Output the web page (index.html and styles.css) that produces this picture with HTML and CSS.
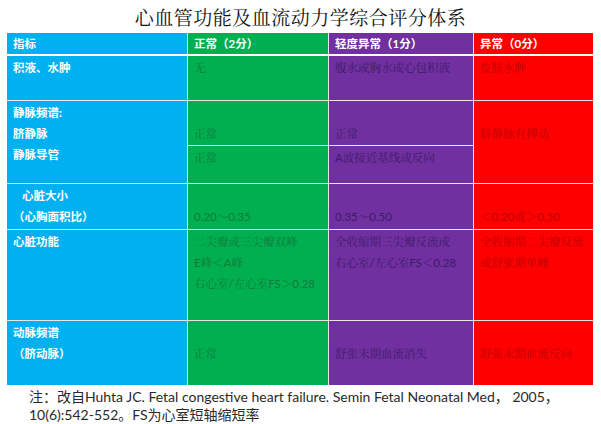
FILE: index.html
```html
<!DOCTYPE html>
<html lang="zh">
<head>
<meta charset="utf-8">
<link rel="stylesheet" href="styles.css">
</head>
<body>
<h1 class="title">心血管功能及血流动力学综合评分体系</h1>
<div class="table">
  <div class="head">
    <div class="c blue">指标</div>
    <div class="c green">正常（2分）</div>
    <div class="c purple">轻度异常（1分）</div>
    <div class="c red">异常（0分）</div>
  </div>
  <div class="body">
    <div class="c blue">积液、水肿</div>
    <div class="c green">无</div>
    <div class="c purple">腹水或胸水或心包积液</div>
    <div class="c red">皮肤水肿</div>

    <div class="c blue span2">静脉频谱:<br>脐静脉<br>静脉导管</div>
    <div class="c green l2">正常</div>
    <div class="c purple l2">正常</div>
    <div class="c red span2 l2">脐静脉有搏动</div>
    <div class="c green">正常</div>
    <div class="c purple">A波接近基线或反向</div>

    <div class="c blue"><span class="indent">心脏大小</span><br>（心胸面积比）</div>
    <div class="c green l2">0.20～0.35</div>
    <div class="c purple l2">0.35～0.50</div>
    <div class="c red l2">＜0.20或＞0.50</div>

    <div class="c blue">心脏功能</div>
    <div class="c green">二尖瓣或三尖瓣双峰<br>E峰＜A峰<br>右心室/左心室FS＞0.28</div>
    <div class="c purple">全收缩期三尖瓣反流或<br>右心室/左心室FS＜0.28</div>
    <div class="c red">全收缩期二尖瓣反流<br>或舒张期单峰</div>

    <div class="c blue">动脉频谱<br>（脐动脉）</div>
    <div class="c green l2">正常</div>
    <div class="c purple l2">舒张末期血流消失</div>
    <div class="c red l2">舒张末期血流反向</div>
  </div>
</div>
<p class="note">注：改自Huhta JC. Fetal congestive heart failure. Semin Fetal Neonatal Med， 2005，<br>10(6):542-552。FS为心室短轴缩短率</p>
</body>
</html>
```
FILE: styles.css
```css
html, body {
  margin: 0;
  padding: 0;
  background: #ffffff;
}
body {
  width: 601px;
  height: 424px;
  overflow: hidden;
  font-family: "Lato", "Noto Sans CJK SC", sans-serif;
}
.title {
  margin: 0;
  height: 33px;
  line-height: 33px;
  text-align: center;
  font-family: "Noto Serif CJK SC", "Liberation Serif", "Noto Sans CJK SC", serif;
  font-weight: 400;
  font-size: 19px;
  color: #111;
  letter-spacing: 0.5px;
}
.table {
  margin-left: 7px;
  width: 586px;
}
.head, .body {
  display: grid;
  grid-template-columns: 180px 140px 144px 119px;
  column-gap: 1px;
  row-gap: 1px;
  background: #e6e6e6;
}
.head {
  grid-template-rows: 21px;
  margin-bottom: 2px;
  border-bottom: 0;
}
.body {
  grid-template-rows: 44px 44px 37px 45px 90px 64px;
}
.c {
  padding: 1px 0 0 6px;
  font-size: 11.5px;
  line-height: 21px;
  font-family: "Lato", "Noto Serif CJK SC", "Noto Sans CJK SC", serif;
}
.head .c {
  padding-top: 0;
  line-height: 21px;
  color: #ffffff;
  font-weight: 700;
  font-family: "Lato", "Noto Sans CJK SC", sans-serif;
}
.blue {
  background: #00b0f0;
  color: #ffffff;
  font-weight: 700;
}
.body .blue {
  font-family: "Lato", "Noto Sans CJK SC", sans-serif;
}
.green {
  background: #00b050;
  color: #137a38;
}
.purple {
  background: #7030a0;
  color: #3d1a6a;
}
.red {
  background: #ff0000;
  color: #b80000;
}
.span2 {
  grid-row: span 2;
}
.l2 {
  padding-top: 22px;
}
.indent {
  padding-left: 9px;
}
.note {
  margin: 3px 0 0 29px;
  font-size: 14px;
  line-height: 18px;
  color: #2a2a2a;
  font-family: "Lato", "Noto Sans CJK SC", sans-serif;
}
```
